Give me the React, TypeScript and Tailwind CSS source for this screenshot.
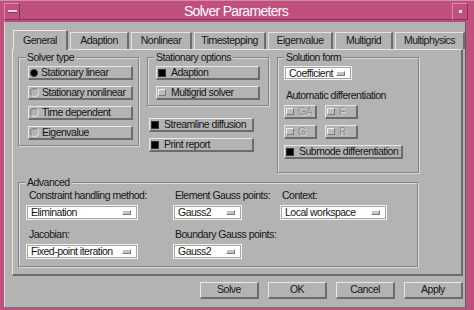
import React from 'react';

const FONT = "font-['Liberation_Sans',Arial,sans-serif]";
const RAISED =
  'border-t border-l border-t-[#e8e8e8] border-l-[#e8e8e8] border-b-2 border-r-2 border-b-[#6c6c6c] border-r-[#6c6c6c]';

function Radio({ on }: { on?: boolean }) {
  if (on) {
    return <span className="w-[8px] h-[8px] rounded-full bg-black border border-[#3a3a3a] shrink-0" />;
  }
  return (
    <span className="w-[9px] h-[9px] rounded-full bg-[#b3b3b3] border border-t-[#7c7c7c] border-l-[#7c7c7c] border-b-[#e2e2e2] border-r-[#e2e2e2] shrink-0" />
  );
}

function Check({ on }: { on?: boolean }) {
  if (on) return <span className="w-[8px] h-[8px] bg-black border border-[#333] shrink-0" />;
  return (
    <span className="w-[8px] h-[7px] bg-[#bcbcbc] border border-t-[#f0f0f0] border-l-[#f0f0f0] border-b-[#7a7a7a] border-r-[#7a7a7a] shrink-0" />
  );
}

function RadioBtn({ label, on }: { label: string; on?: boolean }) {
  return (
    <div className={`flex items-center h-[14px] w-full pl-[1px] gap-[3px] ${RAISED}`}>
      <Radio on={on} />
      <span className="leading-none whitespace-nowrap">{label}</span>
    </div>
  );
}

function Toggle({ label, on, className }: { label: string; on?: boolean; className: string }) {
  return (
    <div className={`flex items-center h-[14px] pl-[1px] gap-[5px] ${RAISED} ${className}`}>
      <Check on={on} />
      <span className="leading-none whitespace-nowrap">{label}</span>
    </div>
  );
}

function Dim({ label }: { label: string }) {
  return (
    <div className={`flex items-center h-[14px] w-[33px] pl-[1px] gap-[4px] ${RAISED}`}>
      <Check />
      <span className="leading-none text-[#8e8e8e] [text-shadow:1px_1px_0_#d8d8d8]">{label}</span>
    </div>
  );
}

function Option({ value, className }: { value: string; className: string }) {
  return (
    <div
      className={`flex items-center bg-white border border-[#f4f4f4] shadow-[inset_0_0_0_1px_#a4a4a4] pl-[4px] pr-[6px] ${className}`}
    >
      <span className="leading-none whitespace-nowrap">{value}</span>
      <span className="ml-auto shrink-0 w-[9px] h-[5px] bg-[#c4c4c4] border border-t-white border-l-white border-b-[#7a7a7a] border-r-[#7a7a7a]" />
    </div>
  );
}

function Group({ title, className, children }: { title: string; className: string; children: React.ReactNode }) {
  return (
    <fieldset
      className={`border border-[#838383] shadow-[1px_1px_0_#dadada,inset_1px_1px_0_#dadada] ${className}`}
    >
      <legend className="ml-[6px] px-[2px] bg-[#b3b3b3] leading-[12px] whitespace-nowrap">{title}</legend>
      {children}
    </fieldset>
  );
}

const tabs = [
  { name: 'General', w: 'w-[55px]' },
  { name: 'Adaption', w: 'w-[59px]' },
  { name: 'Nonlinear', w: 'w-[61px]' },
  { name: 'Timestepping', w: 'w-[72px]' },
  { name: 'Eigenvalue', w: 'w-[65px]' },
  { name: 'Multigrid', w: 'w-[58px]' },
  { name: 'Multiphysics', w: 'w-[70px]' },
];

export default function App() {
  return (
    <div
      className={`w-[474px] h-[310px] bg-[#c0507e] flex flex-col text-[10.5px] tracking-[-0.5px] text-[#151515] ${FONT}`}
    >
      {/* title bar */}
      <div className="h-[21px] flex items-start border-t border-t-[#dc86a8] shrink-0">
        <div className="ml-[4px] mt-[2px] w-[16px] h-[17px] flex items-center justify-center border-t border-l border-t-[#de8aac] border-l-[#de8aac] border-r border-b border-r-[#8c2f56] border-b-[#8c2f56]">
          <span className="w-[9px] h-[3px] bg-[#f0d6e0] border-b border-b-[#8c2f56]" />
        </div>
        <div className="flex-1 mt-[2px] h-[17px] flex items-center justify-center text-white text-[14px] tracking-[-0.7px] leading-none border-b border-b-[#8c2f56]">
          Solver Parameters
        </div>
        <div className="mr-[6px] mt-[2px] w-[16px] h-[17px] flex items-center justify-center border-t border-l border-t-[#de8aac] border-l-[#de8aac] border-r border-b border-r-[#8c2f56] border-b-[#8c2f56]">
          <span className="w-[3px] h-[3px] bg-[#f0d6e0]" />
        </div>
      </div>

      {/* dialog body */}
      <div className="ml-[4px] w-[462px] h-[286px] bg-[#b3b3b3] border-t border-l border-t-[#6e6e6e] border-l-[#dcdcdc] border-r border-r-[#5e5e5e] flex flex-col">
        <div className="flex items-end gap-[2px] ml-[8px] mt-[8px] h-[19px]">
          {tabs.map((t, i) =>
            i === 0 ? (
              <div
                key={t.name}
                className={`${t.w} h-[20px] -mb-px relative z-10 bg-[#b3b3b3] flex items-center justify-center border-t border-l border-t-[#e8e8e8] border-l-[#e8e8e8] border-r-2 border-r-[#6c6c6c]`}
              >
                {t.name}
              </div>
            ) : (
              <div
                key={t.name}
                className={`${t.w} h-[17px] flex items-center justify-center border-t border-l border-t-[#e2e2e2] border-l-[#e2e2e2] border-r-2 border-r-[#6c6c6c]`}
              >
                {t.name}
              </div>
            )
          )}
        </div>

        {/* tab panel */}
        <div className="ml-[7px] w-[451px] h-[227px] border-t border-l border-t-[#e8e8e8] border-l-[#e8e8e8] border-b-2 border-r-2 border-b-[#6c6c6c] border-r-[#6c6c6c] pl-[5px] pt-[1px] flex flex-col">
          <div className="flex items-start gap-[8px]">
            <Group title="Solver type" className="w-[121px]">
              <div className="pt-[3px] pl-[9px] pr-[5px] pb-[5px] flex flex-col gap-[6px]">
                <RadioBtn label="Stationary linear" on />
                <RadioBtn label="Stationary nonlinear" />
                <RadioBtn label="Time dependent" />
                <RadioBtn label="Eigenvalue" />
              </div>
            </Group>

            <div className="flex flex-col w-[122px]">
              <Group title="Stationary options" className="w-[122px]">
                <div className="pt-[3px] pl-[8px] pb-[5px] flex flex-col gap-[6px]">
                  <Toggle label="Adaption" on className="w-[104px]" />
                  <Toggle label="Multigrid solver" className="w-[104px]" />
                </div>
              </Group>
              <div className="mt-[12px] ml-[2px] flex flex-col gap-[6px]">
                <Toggle label="Streamline diffusion" on className="w-[105px]" />
                <Toggle label="Print report" on className="w-[105px]" />
              </div>
            </div>

            <Group title="Solution form" className="w-[142px] h-[122px]">
              <div className="pt-[3px] pl-[6px] flex flex-col">
                <Option value="Coefficient" className="w-[68px] h-[14px]" />
                <div className="mt-[9px] ml-[2px] leading-[12px] whitespace-nowrap">Automatic differentiation</div>
                <div className="mt-[4px] flex gap-[8px]">
                  <Dim label="GA" />
                  <Dim label="F" />
                </div>
                <div className="mt-[6px] flex gap-[8px]">
                  <Dim label="G" />
                  <Dim label="R" />
                </div>
                <Toggle label="Submode differentiation" on className="mt-[6px] w-[119px]" />
              </div>
            </Group>
          </div>

          <Group title="Advanced" className="mt-[3px] w-[400px]">
            <div className="pt-[1px] pl-[7px] pb-[7px] flex">
              <div className="w-[147px] flex flex-col">
                <div className="pl-[3px] leading-[12px] whitespace-nowrap">Constraint handling method:</div>
                <Option value="Elimination" className="mt-[4px] w-[112px] h-[15px]" />
                <div className="mt-[8px] pl-[3px] leading-[12px]">Jacobian:</div>
                <Option value="Fixed-point iteration" className="mt-[4px] w-[112px] h-[15px]" />
              </div>
              <div className="w-[107px] flex flex-col">
                <div className="pl-[2px] leading-[12px] whitespace-nowrap">Element Gauss points:</div>
                <Option value="Gauss2" className="mt-[4px] w-[69px] h-[15px]" />
                <div className="mt-[8px] pl-[2px] leading-[12px] whitespace-nowrap">Boundary Gauss points:</div>
                <Option value="Gauss2" className="mt-[4px] w-[69px] h-[15px]" />
              </div>
              <div className="flex flex-col">
                <div className="pl-[2px] leading-[12px]">Context:</div>
                <Option value="Local workspace" className="mt-[4px] w-[107px] h-[15px]" />
              </div>
            </div>
          </Group>
        </div>

        {/* buttons */}
        <div className="ml-[7px] w-[451px] mt-[6px] flex justify-end gap-[9px]">
          {['Solve', 'OK', 'Cancel', 'Apply'].map((b) => (
            <div key={b} className={`w-[59px] h-[17px] flex items-center justify-center ${RAISED}`}>
              {b}
            </div>
          ))}
        </div>
      </div>
    </div>
  );
}
